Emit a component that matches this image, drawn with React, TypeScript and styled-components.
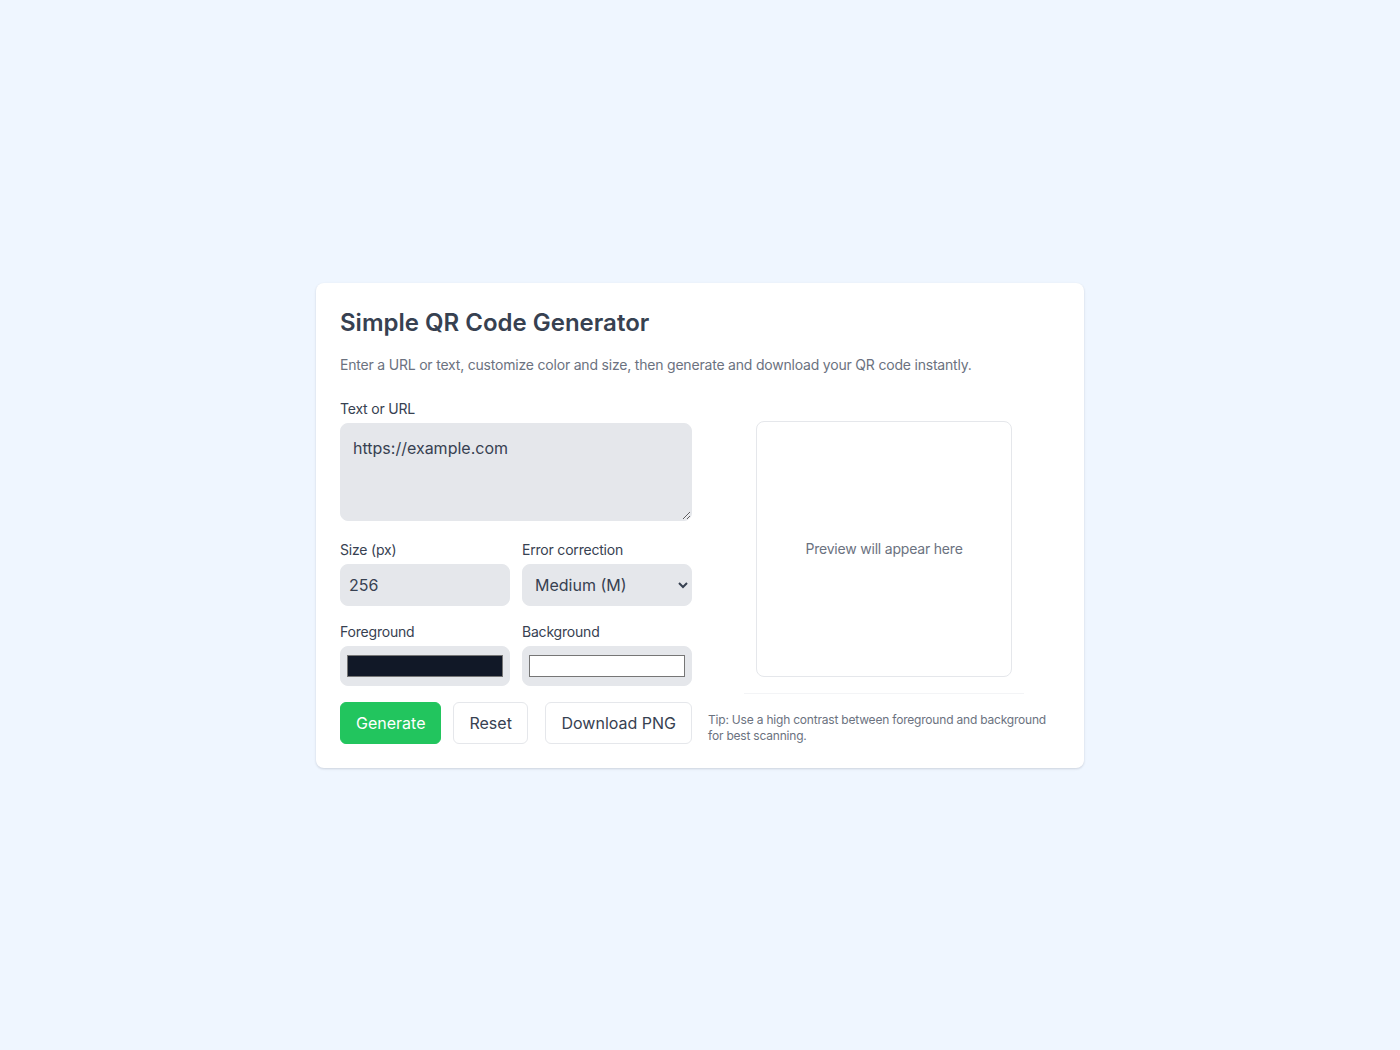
import React, { useState } from "react";
import styled, { createGlobalStyle } from "styled-components";

const GlobalStyle = createGlobalStyle`
  * { box-sizing: border-box; }
  body {
    margin: 0;
    background: #eff6ff;
    font-family: "Inter", "Liberation Sans", sans-serif;
    letter-spacing: -0.2px;
    color: #374151;
  }
`;

const Page = styled.main`
  min-height: 100vh;
  display: flex;
  align-items: center;
  justify-content: center;
`;

const Card = styled.section`
  width: 768px;
  background: #ffffff;
  border-radius: 8px;
  box-shadow: 0 1px 3px rgba(15, 23, 42, 0.1), 0 1px 2px rgba(15, 23, 42, 0.06);
  padding: 24px;
`;

const Title = styled.h1`
  margin: 0 0 16px;
  font-size: 24px;
  line-height: 32px;
  font-weight: 600;
  letter-spacing: 0;
  color: #374151;
`;

const Intro = styled.p`
  margin: 0 0 24px;
  font-size: 14px;
  line-height: 20px;
  color: #6b7280;
`;

const Columns = styled.div`
  display: grid;
  grid-template-columns: 352px 352px;
  gap: 16px;
`;

const FormColumn = styled.div`
  display: flex;
  flex-direction: column;
`;

const Field = styled.label`
  display: flex;
  flex-direction: column;
  gap: 4px;
  min-width: 0;
  margin-bottom: 16px;
`;

const Label = styled.span`
  font-size: 14px;
  line-height: 20px;
  color: #374151;
`;

const TextArea = styled.textarea`
  width: 100%;
  height: 98px;
  padding: 12px;
  border: 1px solid #e5e7eb;
  border-radius: 8px;
  background: #e5e7eb;
  font: inherit;
  font-size: 16px;
  line-height: 24px;
  color: #374151;
  resize: vertical;
  margin-bottom: 3px;
`;

const Pair = styled.div`
  display: grid;
  grid-template-columns: minmax(0, 1fr) minmax(0, 1fr);
  gap: 12px;
`;

const Input = styled.input`
  width: 100%;
  height: 42px;
  padding: 8px;
  border: 1px solid #e5e7eb;
  border-radius: 8px;
  background: #e5e7eb;
  font: inherit;
  font-size: 16px;
  color: #374151;
`;

const Select = styled.select`
  width: 100%;
  height: 42px;
  padding: 8px;
  border: 1px solid #e5e7eb;
  border-radius: 8px;
  background: #e5e7eb;
  font: inherit;
  font-size: 16px;
  color: #374151;
`;

const ColorInput = styled.input`
  width: 100%;
  height: 40px;
  padding: 8px 6px;
  border: 1px solid #e5e7eb;
  border-radius: 8px;
  background: #e5e7eb;
  cursor: pointer;
  &::-webkit-color-swatch-wrapper { padding: 0; }
  &::-webkit-color-swatch { border: 1px solid #767676; border-radius: 0; }
`;

const Actions = styled.div`
  display: flex;
  gap: 12px;
`;

const Button = styled.button<{ $primary?: boolean; $push?: boolean }>`
  height: 42px;
  padding: 0 15px;
  border-radius: 6px;
  border: 1px solid ${(p) => (p.$primary ? "#22c55e" : "#e5e7eb")};
  background: ${(p) => (p.$primary ? "#22c55e" : "#ffffff")};
  color: ${(p) => (p.$primary ? "#ffffff" : "#374151")};
  font: inherit;
  font-size: 16px;
  white-space: nowrap;
  cursor: pointer;
  margin-left: ${(p) => (p.$push ? "auto" : "0")};
`;

const PreviewColumn = styled.div`
  display: flex;
  flex-direction: column;
  justify-content: space-between;
`;

const PreviewWrap = styled.div`
  align-self: center;
  width: 280px;
  padding: 22px 12px 16px;
  border-bottom: 1px solid #f3f4f6;
`;

const PreviewBox = styled.div`
  width: 256px;
  height: 256px;
  border: 1px solid #e5e7eb;
  border-radius: 8px;
  display: flex;
  align-items: center;
  justify-content: center;
  font-size: 14px;
  color: #6b7280;
`;

const Tip = styled.p`
  margin: 0;
  font-size: 12px;
  line-height: 16px;
  color: #6b7280;
`;

export default function App() {
  const [text, setText] = useState("https://example.com");
  const [size, setSize] = useState("256");
  const [level, setLevel] = useState("M");
  const [fg, setFg] = useState("#111827");
  const [bg, setBg] = useState("#ffffff");

  return (
    <Page>
      <GlobalStyle />
      <Card>
        <Title>Simple QR Code Generator</Title>
        <Intro>
          Enter a URL or text, customize color and size, then generate and download your QR code instantly.
        </Intro>
        <Columns>
          <FormColumn>
            <Field>
              <Label>Text or URL</Label>
              <TextArea value={text} onChange={(e) => setText(e.target.value)} />
            </Field>
            <Pair>
              <Field>
                <Label>Size (px)</Label>
                <Input value={size} onChange={(e) => setSize(e.target.value)} />
              </Field>
              <Field>
                <Label>Error correction</Label>
                <Select value={level} onChange={(e) => setLevel(e.target.value)}>
                  <option value="L">Low (L)</option>
                  <option value="M">Medium (M)</option>
                  <option value="Q">Quartile (Q)</option>
                  <option value="H">High (H)</option>
                </Select>
              </Field>
            </Pair>
            <Pair>
              <Field>
                <Label>Foreground</Label>
                <ColorInput type="color" value={fg} onChange={(e) => setFg(e.target.value)} />
              </Field>
              <Field>
                <Label>Background</Label>
                <ColorInput type="color" value={bg} onChange={(e) => setBg(e.target.value)} />
              </Field>
            </Pair>
            <Actions>
              <Button $primary>Generate</Button>
              <Button>Reset</Button>
              <Button $push>Download PNG</Button>
            </Actions>
          </FormColumn>
          <PreviewColumn>
            <PreviewWrap>
              <PreviewBox>Preview will appear here</PreviewBox>
            </PreviewWrap>
            <Tip>
              Tip: Use a high contrast between foreground and background for best scanning.
            </Tip>
          </PreviewColumn>
        </Columns>
      </Card>
    </Page>
  );
}
